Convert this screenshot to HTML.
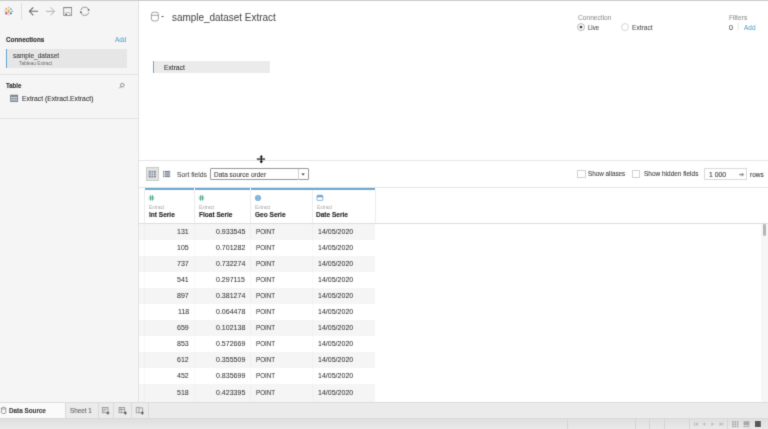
<!DOCTYPE html>
<html><head><meta charset="utf-8">
<style>
*{margin:0;padding:0;box-sizing:border-box}
html,body{width:768px;height:429px;overflow:hidden;background:#fff;font-family:"Liberation Sans",sans-serif;color:#555}
.a{position:absolute}
.t{position:absolute;white-space:nowrap;line-height:1;transform-origin:0 0;-webkit-text-stroke:0.1px currentColor}
svg{position:absolute;overflow:visible}
.r{-webkit-text-stroke:0.05px currentColor}
.b{font-weight:bold;-webkit-text-stroke:0.15px currentColor}
#root{position:absolute;left:0;top:0;width:768px;height:429px;overflow:hidden;background:#fff;filter:url(#bl)}
</style></head><body><svg width="0" height="0" style="position:absolute"><filter id="bl" x="0" y="0" width="100%" height="100%" color-interpolation-filters="sRGB"><feConvolveMatrix order="3" kernelMatrix="1 6 1 6 36 6 1 6 1" edgeMode="duplicate" preserveAlpha="true"/></filter></svg><div id="root">
<!-- top border -->
<div class="a" style="left:0;top:0;width:768px;height:1px;background:#cdcdcd"></div>

<!-- sidebar -->
<div class="a" style="left:0;top:1px;width:138px;height:401px;background:#f5f5f5"></div>
<div class="a" style="left:138px;top:1px;width:1px;height:401px;background:#e2e2e2"></div>

<!-- logo -->
<svg style="left:0;top:0" width="20" height="20" viewBox="0 0 20 20">
  <g stroke-linecap="butt">
    <path d="M8.5 9.6v3.4M6.8 11.3h3.4" stroke="#e8a54a" stroke-width="1.1"/>
    <path d="M6.3 7.6v2.6M5 8.9h2.6" stroke="#f0b060" stroke-width="0.9"/>
    <path d="M6.3 12v2.6M5 13.3h2.6" stroke="#c8385a" stroke-width="0.9"/>
    <path d="M10.8 7.9v2.2M9.7 9h2.2" stroke="#7aaab8" stroke-width="0.8"/>
    <path d="M10.8 12.2v2.2M9.7 13.3h2.2" stroke="#3d6aa0" stroke-width="0.9"/>
    <path d="M8.7 6.8v1.4M8 7.5h1.4" stroke="#8ab8c8" stroke-width="0.6"/>
    <path d="M5.2 10.6v1.4M4.5 11.3h1.4" stroke="#8ab8c8" stroke-width="0.6"/>
    <path d="M12.3 10.6v1.4M11.6 11.3h1.4" stroke="#7070a8" stroke-width="0.6"/>
    <path d="M8.5 14.1v1.4M7.8 14.8h1.4" stroke="#a8c0d8" stroke-width="0.6"/>
  </g>
</svg>
<div class="a" style="left:21px;top:3px;width:1px;height:17px;background:#dedede"></div>
<!-- back arrow -->
<svg style="left:0;top:0" width="100" height="20">
  <path d="M29.5 11.3H38M33.3 7.3L29.5 11.3L33.3 15.3" fill="none" stroke="#6a6a6a" stroke-width="1.1"/>
  <path d="M46 11.3H54.5M50.7 7.3L54.5 11.3L50.7 15.3" fill="none" stroke="#b0b0b0" stroke-width="1"/>
  <rect x="63.7" y="7.4" width="7.9" height="8" fill="none" stroke="#8a8a8a" stroke-width="0.85"/>
  <path d="M63.7 7.6h7.9" stroke="#888" stroke-width="1.1"/>
  <path d="M65.2 15.2V13.6Q65.2 12.5 66.3 12.5H68.8Q69.9 12.5 69.9 13.6V15.2" fill="none" stroke="#999" stroke-width="0.7"/>
  <circle cx="66.4" cy="14.5" r="0.75" fill="#555"/>
  <path d="M80.74 10.21A4.2 4.2 0 0 1 88.69 9.73M88.86 12.39A4.2 4.2 0 0 1 80.85 12.74" fill="none" stroke="#8a8a8a" stroke-width="0.85"/>
  <circle cx="88.6" cy="9.9" r="0.85" fill="#555"/>
  <circle cx="80.9" cy="12.2" r="0.85" fill="#555"/>
</svg>

<div class="a" style="left:6px;top:49px;width:121px;height:19px;background:#e6e6e6;border-left:1.6px solid #62a5cf"></div>
<div class="a" style="left:0;top:74px;width:138px;height:1px;background:#e3e3e3"></div>
<div class="a" style="left:0;top:118px;width:138px;height:1px;background:#e2e2e2"></div>
<svg style="left:0;top:0" width="138" height="110">
  <circle cx="122.3" cy="85.2" r="1.8" fill="none" stroke="#777" stroke-width="0.8"/>
  <path d="M121 86.6L119.3 88.3" stroke="#777" stroke-width="0.9"/>
  <rect x="10.7" y="95.2" width="6.9" height="6.4" fill="#e6eaee" stroke="#6f7c8a" stroke-width="0.85"/>
  <rect x="10.7" y="95.2" width="6.9" height="1.6" fill="#6f7c8a"/>
  <path d="M10.7 98.4H17.6M10.7 100.1H17.6" stroke="#6f7c8a" stroke-width="0.75"/>
  <path d="M13 96.7V101.6M15.3 96.7V101.6" stroke="#8e9aa6" stroke-width="0.6"/>
</svg>

<!-- main header -->
<svg style="left:0;top:0" width="200" height="30">
  <rect x="151.4" y="12.2" width="7" height="8.8" rx="2.4" ry="2" fill="none" stroke="#8c8c8c" stroke-width="0.8"/>
  <path d="M151.4 15.3h7" stroke="#8c8c8c" stroke-width="0.8"/>
  <path d="M161.1 15.9h2.9l-1.45 1.3z" fill="#444"/>
</svg>

<svg style="left:0;top:0" width="768" height="40">
  <circle cx="581" cy="27.1" r="3.5" fill="#fff" stroke="#9a9a9a" stroke-width="0.7"/>
  <circle cx="581" cy="27.1" r="1.4" fill="#444"/>
  <circle cx="625" cy="27.1" r="3.5" fill="#fff" stroke="#c4c4c4" stroke-width="0.7"/>
  <path d="M738.2 23v7.6" stroke="#e0e0e0" stroke-width="0.8"/>
</svg>

<!-- extract pill -->
<div class="a" style="left:153.4px;top:61px;width:117px;height:12.2px;background:#ebebeb;border-left:1.8px solid #6aa8cf"></div>

<!-- toolbar -->
<div class="a" style="left:139px;top:160px;width:629px;height:1px;background:#e6e6e6"></div>
<svg style="left:0;top:0" width="768" height="200">
  <path d="M256.8 159.1h8.3" stroke="#6a6a6a" stroke-width="2"/>
  <path d="M261.3 156v6.4" stroke="#111" stroke-width="1.1"/>
  <path d="M259.6 157.2l1.7-2.3 1.7 2.3zM259.6 161.1l1.7 2.3 1.7-2.3z" fill="#111"/>
</svg>
<div class="a" style="left:145.6px;top:167.4px;width:13.3px;height:13.3px;background:#e2e2e2;border:0.8px solid #cbcbcb"></div>
<svg style="left:0;top:0" width="768" height="200">
  <rect x="148.7" y="170.9" width="7.1" height="6.5" fill="#7a8493"/>
  <path d="M151.1 170.9v6.5M153.4 170.9v6.5M148.7 173.0h7.1M148.7 175.2h7.1" stroke="#eef0f3" stroke-width="0.7"/>
  <rect x="163" y="170.9" width="7.1" height="6.2" fill="#7a8493"/>
  <path d="M164.4 170.9v6.2M163 173h7.1M163 175.1h7.1" stroke="#f4f6f8" stroke-width="0.7"/>
</svg>
<div class="a" style="left:210px;top:168.2px;width:99px;height:12.3px;background:#fff;border:0.8px solid #9a9a9a;border-radius:1px"></div>
<div class="a" style="left:298.2px;top:169px;width:0.8px;height:11px;background:#d0d0d0"></div>
<svg style="left:0;top:0" width="768" height="200">
  <path d="M301.4 173.5h3.4l-1.7 2.1z" fill="#333"/>
</svg>

<div class="a" style="left:577.4px;top:169.6px;width:8.3px;height:8.2px;background:#fff;border:0.8px solid #d2d2d2"></div>
<div class="a" style="left:632.3px;top:169.6px;width:8px;height:8.2px;background:#fff;border:0.8px solid #d2d2d2"></div>
<div class="a" style="left:704.2px;top:168px;width:42.7px;height:12.4px;background:#fff;border:0.8px solid #dadada"></div>
<svg style="left:0;top:0" width="768" height="200">
  <path d="M739.2 174.6h3" stroke="#999" stroke-width="1.6"/>
  <path d="M741.8 172.4l2.6 2.2-2.6 2.2z" fill="#999"/>
</svg>
<div class="a" style="left:139px;top:187px;width:629px;height:1px;background:#e4e4e4"></div>

<!-- grid header -->
<div class="a" style="left:139px;top:223px;width:629px;height:1px;background:#dedede"></div>
<div class="a" style="left:144px;top:188px;width:231px;height:35px;background:#fff"></div>
<div class="a" style="left:144.5px;top:188.2px;width:49px;height:2px;background:#6aa9d1"></div>
<div class="a" style="left:194.5px;top:188.2px;width:55.5px;height:2px;background:#6aa9d1"></div>
<div class="a" style="left:250.8px;top:188.2px;width:60.8px;height:2px;background:#6aa9d1"></div>
<div class="a" style="left:312.4px;top:188.2px;width:62.6px;height:2px;background:#6aa9d1"></div>
<div class="a" style="left:143.8px;top:190px;width:0.6px;height:33px;background:#ececec"></div>
<div class="a" style="left:193.8px;top:190px;width:0.6px;height:33px;background:#ececec"></div>
<div class="a" style="left:250.3px;top:190px;width:0.6px;height:33px;background:#ececec"></div>
<div class="a" style="left:311.8px;top:190px;width:0.6px;height:33px;background:#ececec"></div>
<div class="a" style="left:375px;top:190px;width:0.6px;height:33px;background:#ececec"></div>
<svg style="left:0;top:0" width="768" height="230">
  <g stroke="#52ab8c">
    <path d="M150.6 195.2v5.4M152.5 195.2v5.4M200.6 195.2v5.4M202.5 195.2v5.4" stroke-width="1"/>
    <path d="M148.7 197.1h5.7M148.7 198.9h5.7M198.7 197.1h5.7M198.7 198.9h5.7" stroke-width="0.7"/>
  </g>
  <circle cx="258" cy="198" r="3" fill="#74acd2"/>
  <path d="M255.4 198h5.2M258 195.2v5.6M256.2 196.3a3.5 2 0 0 0 3.6 0M256.2 199.7a3.5 2 0 0 1 3.6 0" fill="none" stroke="#a9cde5" stroke-width="0.4"/>
  <rect x="317" y="195.4" width="5.8" height="5" rx="0.6" fill="#fff" stroke="#6aa6cf" stroke-width="0.8"/>
  <rect x="317" y="195.4" width="5.8" height="1.9" fill="#6aa6cf"/>
  <path d="M318.6 194.6v1.4M321.2 194.6v1.4" stroke="#6aa6cf" stroke-width="0.6"/>
</svg>

<!-- rows -->
<div class="a" style="left:139px;top:223.6px;width:236px;height:16.0px;background:#f5f5f5"></div>
<div class="t r" style="left:177.27px;top:228.52px;font-size:6.59px;color:#383838;transform:scaleX(1.070)">131</div>
<div class="t r" style="left:215.76px;top:228.52px;font-size:6.59px;color:#383838;transform:scaleX(1.070)">0.933545</div>
<div class="t r" style="left:255.78px;top:228.52px;font-size:6.59px;color:#383838;transform:scaleX(0.956)">POINT</div>
<div class="t r" style="left:317.77px;top:228.52px;font-size:6.59px;color:#383838;transform:scaleX(1.070)">14/05/2020</div>
<div class="t r" style="left:177.22px;top:244.62px;font-size:6.59px;color:#383838;transform:scaleX(1.070)">105</div>
<div class="t r" style="left:215.83px;top:244.62px;font-size:6.59px;color:#383838;transform:scaleX(1.070)">0.701282</div>
<div class="t r" style="left:255.78px;top:244.62px;font-size:6.59px;color:#383838;transform:scaleX(0.956)">POINT</div>
<div class="t r" style="left:317.77px;top:244.62px;font-size:6.59px;color:#383838;transform:scaleX(1.070)">14/05/2020</div>
<div class="a" style="left:139px;top:255.6px;width:236px;height:16.0px;background:#f5f5f5"></div>
<div class="t r" style="left:177.29px;top:260.72px;font-size:6.59px;color:#383838;transform:scaleX(1.070)">737</div>
<div class="t r" style="left:215.67px;top:260.72px;font-size:6.59px;color:#383838;transform:scaleX(1.070)">0.732274</div>
<div class="t r" style="left:255.78px;top:260.72px;font-size:6.59px;color:#383838;transform:scaleX(0.956)">POINT</div>
<div class="t r" style="left:317.77px;top:260.72px;font-size:6.59px;color:#383838;transform:scaleX(1.070)">14/05/2020</div>
<div class="t r" style="left:177.27px;top:276.82px;font-size:6.59px;color:#383838;transform:scaleX(1.070)">541</div>
<div class="t r" style="left:216.29px;top:276.82px;font-size:6.59px;color:#383838;transform:scaleX(1.070)">0.297115</div>
<div class="t r" style="left:255.78px;top:276.82px;font-size:6.59px;color:#383838;transform:scaleX(0.956)">POINT</div>
<div class="t r" style="left:317.77px;top:276.82px;font-size:6.59px;color:#383838;transform:scaleX(1.070)">14/05/2020</div>
<div class="a" style="left:139px;top:287.6px;width:236px;height:16.0px;background:#f5f5f5"></div>
<div class="t r" style="left:177.29px;top:292.92px;font-size:6.59px;color:#383838;transform:scaleX(1.070)">897</div>
<div class="t r" style="left:215.67px;top:292.92px;font-size:6.59px;color:#383838;transform:scaleX(1.070)">0.381274</div>
<div class="t r" style="left:255.78px;top:292.92px;font-size:6.59px;color:#383838;transform:scaleX(0.956)">POINT</div>
<div class="t r" style="left:317.77px;top:292.92px;font-size:6.59px;color:#383838;transform:scaleX(1.070)">14/05/2020</div>
<div class="t r" style="left:177.76px;top:309.02px;font-size:6.59px;color:#383838;transform:scaleX(1.070)">118</div>
<div class="t r" style="left:215.78px;top:309.02px;font-size:6.59px;color:#383838;transform:scaleX(1.070)">0.064478</div>
<div class="t r" style="left:255.78px;top:309.02px;font-size:6.59px;color:#383838;transform:scaleX(0.956)">POINT</div>
<div class="t r" style="left:317.77px;top:309.02px;font-size:6.59px;color:#383838;transform:scaleX(1.070)">14/05/2020</div>
<div class="a" style="left:139px;top:319.6px;width:236px;height:16.0px;background:#f5f5f5"></div>
<div class="t r" style="left:177.25px;top:325.12px;font-size:6.59px;color:#383838;transform:scaleX(1.070)">659</div>
<div class="t r" style="left:215.78px;top:325.12px;font-size:6.59px;color:#383838;transform:scaleX(1.070)">0.102138</div>
<div class="t r" style="left:255.78px;top:325.12px;font-size:6.59px;color:#383838;transform:scaleX(0.956)">POINT</div>
<div class="t r" style="left:317.77px;top:325.12px;font-size:6.59px;color:#383838;transform:scaleX(1.070)">14/05/2020</div>
<div class="t r" style="left:177.24px;top:341.22px;font-size:6.59px;color:#383838;transform:scaleX(1.070)">853</div>
<div class="t r" style="left:215.80px;top:341.22px;font-size:6.59px;color:#383838;transform:scaleX(1.070)">0.572669</div>
<div class="t r" style="left:255.78px;top:341.22px;font-size:6.59px;color:#383838;transform:scaleX(0.956)">POINT</div>
<div class="t r" style="left:317.77px;top:341.22px;font-size:6.59px;color:#383838;transform:scaleX(1.070)">14/05/2020</div>
<div class="a" style="left:139px;top:351.6px;width:236px;height:16.0px;background:#f5f5f5"></div>
<div class="t r" style="left:177.29px;top:357.32px;font-size:6.59px;color:#383838;transform:scaleX(1.070)">612</div>
<div class="t r" style="left:215.80px;top:357.32px;font-size:6.59px;color:#383838;transform:scaleX(1.070)">0.355509</div>
<div class="t r" style="left:255.78px;top:357.32px;font-size:6.59px;color:#383838;transform:scaleX(0.956)">POINT</div>
<div class="t r" style="left:317.77px;top:357.32px;font-size:6.59px;color:#383838;transform:scaleX(1.070)">14/05/2020</div>
<div class="t r" style="left:177.29px;top:373.42px;font-size:6.59px;color:#383838;transform:scaleX(1.070)">452</div>
<div class="t r" style="left:215.80px;top:373.42px;font-size:6.59px;color:#383838;transform:scaleX(1.070)">0.835699</div>
<div class="t r" style="left:255.78px;top:373.42px;font-size:6.59px;color:#383838;transform:scaleX(0.956)">POINT</div>
<div class="t r" style="left:317.77px;top:373.42px;font-size:6.59px;color:#383838;transform:scaleX(1.070)">14/05/2020</div>
<div class="a" style="left:139px;top:383.6px;width:236px;height:18.4px;background:#f5f5f5"></div>
<div class="t r" style="left:177.24px;top:389.52px;font-size:6.59px;color:#383838;transform:scaleX(1.070)">518</div>
<div class="t r" style="left:215.76px;top:389.52px;font-size:6.59px;color:#383838;transform:scaleX(1.070)">0.423395</div>
<div class="t r" style="left:255.78px;top:389.52px;font-size:6.59px;color:#383838;transform:scaleX(0.956)">POINT</div>
<div class="t r" style="left:317.77px;top:389.52px;font-size:6.59px;color:#383838;transform:scaleX(1.070)">14/05/2020</div>
<div class="a" style="left:143.8px;top:224px;width:0.7px;height:178px;background:rgba(0,0,0,0.025)"></div>
<div class="a" style="left:193.8px;top:224px;width:0.7px;height:178px;background:rgba(0,0,0,0.025)"></div>
<div class="a" style="left:250.3px;top:224px;width:0.7px;height:178px;background:rgba(0,0,0,0.025)"></div>
<div class="a" style="left:311.8px;top:224px;width:0.7px;height:178px;background:rgba(0,0,0,0.025)"></div>

<!-- scrollbar -->
<div class="a" style="left:760.5px;top:224px;width:7.5px;height:178px;background:#f6f6f6"></div>
<div class="a" style="left:763px;top:223.5px;width:2.8px;height:12.4px;background:#b5b5b5;border-radius:1.4px"></div>

<!-- tab bar -->
<div class="a" style="left:0;top:402px;width:768px;height:16px;background:#ebebeb;border-top:1px solid #dcdcdc"></div>
<div class="a" style="left:0;top:403px;width:65px;height:15px;background:#fafafa"></div>
<svg style="left:0;top:0" width="768" height="429">
  <path d="M1.4 408.2A2.2 0.9 0 0 1 5.8 408.2V412.6A2.2 0.9 0 0 1 1.4 412.6Z M1.4 408.2A2.2 0.9 0 0 0 5.8 408.2" fill="none" stroke="#777" stroke-width="0.7"/>
</svg>
<div class="a" style="left:65px;top:403px;width:0.8px;height:15px;background:#dadada"></div>
<div class="a" style="left:97.5px;top:403px;width:0.8px;height:15px;background:#dadada"></div>
<div class="a" style="left:113.4px;top:403px;width:0.8px;height:15px;background:#dadada"></div>
<div class="a" style="left:130.8px;top:403px;width:0.8px;height:15px;background:#dadada"></div>
<div class="a" style="left:148.3px;top:403px;width:0.8px;height:15px;background:#dadada"></div>
<svg style="left:0;top:0" width="768" height="429">
  <g fill="none" stroke="#8a8a8a" stroke-width="0.75">
    <rect x="102.3" y="407.4" width="5.7" height="5.3"/>
    <path d="M103.2 409.2h3.8M103.2 410.8h2.2"/>
    <rect x="119.1" y="407.4" width="5.6" height="5.3"/>
    <path d="M121.3 407.4v5.3M119.1 409.5h5.6"/>
    <path d="M136.3 407.4h2.7v5.3h-2.7zM139 407.8h3.6v4.9h-3.6"/>
  </g>
  <path d="M107.9 411.4v3M106.4 412.9h3M125.4 411.4v3M123.9 412.9h3M142.4 411.4v3M140.9 412.9h3" stroke="#555" stroke-width="1.05"/>
</svg>

<!-- status bar -->
<div class="a" style="left:0;top:418px;width:768px;height:11px;background:linear-gradient(180deg,#dfdfdf 0,#e5e5e5 60%,#e9e9e9 100%);border-top:0.8px solid #d9d9d9"></div>
<div class="a" style="left:567px;top:419px;width:0.8px;height:10px;background:#d4d4d4"></div>
<div class="a" style="left:635px;top:419px;width:0.8px;height:10px;background:#d4d4d4"></div>
<div class="a" style="left:649.3px;top:419px;width:0.8px;height:10px;background:#d4d4d4"></div>
<div class="a" style="left:664.3px;top:419px;width:0.8px;height:10px;background:#d4d4d4"></div>
<div class="a" style="left:689.4px;top:419px;width:0.8px;height:10px;background:#d4d4d4"></div>
<div class="a" style="left:727px;top:419px;width:0.8px;height:10px;background:#d4d4d4"></div>
<svg style="left:0;top:0" width="768" height="429">
  <g fill="#b8b8b8">
    <path d="M694 422.3h0.8v3.6H694zM697.8 422.3v3.6l-2.6-1.8z"/>
    <path d="M705.2 422.3v3.6l-2.4-1.8z"/>
    <path d="M711.5 422.3v3.6l2.4-1.8z"/>
    <path d="M719.6 422.3v3.6l2.6-1.8zM722.4 422.3h0.8v3.6h-0.8z"/>
  </g>
  <g fill="#a8a8a8">
    <rect x="732" y="421.2" width="1.6" height="1.6"/><rect x="734.4" y="421.2" width="1.6" height="1.6"/><rect x="736.8" y="421.2" width="1.6" height="1.6"/>
    <rect x="732" y="423.4" width="1.6" height="1.6"/><rect x="734.4" y="423.4" width="1.6" height="1.6"/><rect x="736.8" y="423.4" width="1.6" height="1.6"/>
    <rect x="732" y="425.6" width="1.6" height="1.6"/><rect x="734.4" y="425.6" width="1.6" height="1.6"/><rect x="736.8" y="425.6" width="1.6" height="1.6"/>
    <rect x="743.6" y="421.2" width="5.8" height="3.8"/>
    <rect x="743.6" y="425.6" width="1.6" height="1.6"/><rect x="745.7" y="425.6" width="1.6" height="1.6"/><rect x="747.8" y="425.6" width="1.6" height="1.6"/>
  </g>
  <rect x="755" y="421" width="5.8" height="6" fill="#585858"/>
</svg>
<div class="t" style="-webkit-text-stroke:0.05px #4a4a4a;left:171.93px;top:12.79px;font-size:10.35px;color:#4a4a4a;transform:scaleX(0.960)">sample_dataset Extract</div>
<div class="t b" style="left:6.11px;top:36.74px;font-size:6.80px;color:#333;transform:scaleX(0.931)">Connections</div>
<div class="t" style="left:114.88px;top:36.52px;font-size:6.53px;color:#62a8cc;transform:scaleX(0.984)">Add</div>
<div class="t" style="left:13.12px;top:51.89px;font-size:7.03px;color:#444;transform:scaleX(0.931)">sample_dataset</div>
<div class="t" style="left:18.79px;top:61.76px;font-size:4.83px;color:#858585;transform:scaleX(0.996)">Tableau Extract</div>
<div class="t b" style="left:6.47px;top:81.92px;font-size:7.01px;color:#333;transform:scaleX(0.862)">Table</div>
<div class="t" style="left:21.64px;top:95.09px;font-size:7.03px;color:#3a3a3a;transform:scaleX(0.964)">Extract (Extract.Extract)</div>
<div class="t" style="left:577.57px;top:15.05px;font-size:6.55px;color:#999;transform:scaleX(1.010)">Connection</div>
<div class="t" style="left:587.80px;top:24.07px;font-size:7.30px;color:#505050;transform:scaleX(0.827)">Live</div>
<div class="t" style="left:631.75px;top:23.75px;font-size:7.67px;color:#555;transform:scaleX(0.867)">Extract</div>
<div class="t" style="left:728.65px;top:14.58px;font-size:6.34px;color:#959595;transform:scaleX(1.059)">Filters</div>
<div class="t" style="left:729.02px;top:23.83px;font-size:7.94px;color:#555;transform:scaleX(0.897)">0</div>
<div class="t" style="left:743.88px;top:23.79px;font-size:7.75px;color:#62a8cc;transform:scaleX(0.837)">Add</div>
<div class="t" style="left:163.55px;top:63.95px;font-size:7.56px;color:#333;transform:scaleX(0.884)">Extract</div>
<div class="t" style="left:176.95px;top:172.13px;font-size:6.76px;color:#555;transform:scaleX(0.994)">Sort fields</div>
<div class="t" style="left:214.06px;top:172.13px;font-size:6.76px;color:#444;transform:scaleX(0.964)">Data source order</div>
<div class="t" style="left:588.42px;top:171.08px;font-size:7.17px;color:#444;transform:scaleX(0.883)">Show aliases</div>
<div class="t" style="left:643.51px;top:171.08px;font-size:7.17px;color:#444;transform:scaleX(0.905)">Show hidden fields</div>
<div class="t" style="left:709.39px;top:172.19px;font-size:6.45px;color:#444;transform:scaleX(1.064)">1 000</div>
<div class="t" style="left:750.16px;top:171.59px;font-size:7.15px;color:#444;transform:scaleX(0.911)">rows</div>
<div class="t b" style="left:8.77px;top:407.78px;font-size:7.17px;color:#444;transform:scaleX(0.883)">Data Source</div>
<div class="t" style="left:69.82px;top:408.33px;font-size:6.76px;color:#666;transform:scaleX(0.936)">Sheet 1</div>
<div class="t b" style="left:148.70px;top:211.67px;font-size:6.71px;color:#2e2e2e;transform:scaleX(0.976)">Int Serie</div>
<div class="t" style="left:148.74px;top:205.60px;font-size:4.73px;color:#b8b8b8;transform:scaleX(1.033)">Extract</div>
<div class="t b" style="left:198.70px;top:211.67px;font-size:6.71px;color:#2e2e2e;transform:scaleX(0.976)">Float Serie</div>
<div class="t" style="left:198.74px;top:205.60px;font-size:4.73px;color:#b8b8b8;transform:scaleX(1.033)">Extract</div>
<div class="t b" style="left:255.24px;top:211.67px;font-size:6.71px;color:#2e2e2e;transform:scaleX(0.976)">Geo Serie</div>
<div class="t" style="left:255.10px;top:205.60px;font-size:4.73px;color:#b8b8b8;transform:scaleX(1.033)">Extract</div>
<div class="t b" style="left:316.46px;top:211.67px;font-size:6.71px;color:#2e2e2e;transform:scaleX(0.976)">Date Serie</div>
<div class="t" style="left:316.50px;top:205.60px;font-size:4.73px;color:#b8b8b8;transform:scaleX(1.033)">Extract</div>
</div></body></html>
